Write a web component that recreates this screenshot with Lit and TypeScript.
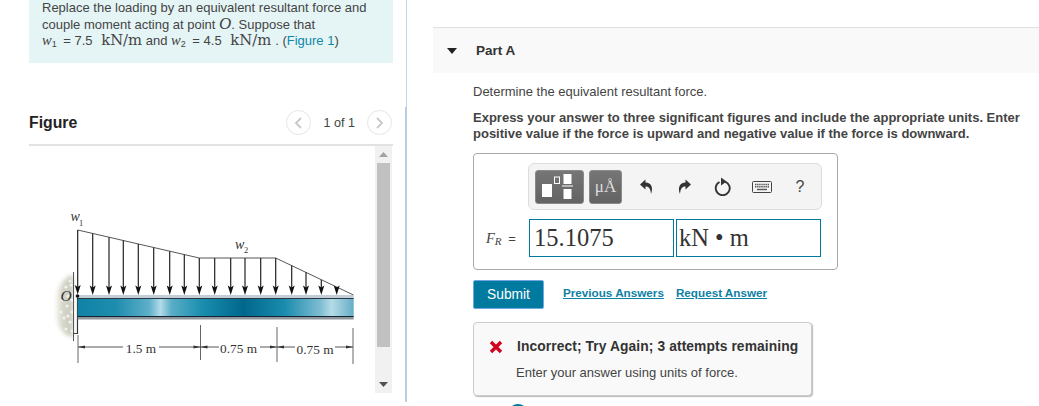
import { LitElement, html, css, svg } from "lit";
import { customElement } from "lit/decorators.js";

const ARROWS = [92.7, 109, 123.3, 138.3, 153.7, 169.7, 184.3, 199.3, 214.7, 230.7, 245, 260.7, 275.7, 291.7, 306, 321.3, 336.7];
function topAt(x: number) {
  if (x <= 199.3) return 230 + ((x - 77.7) / 121.6) * 28;
  if (x <= 275.7) return 258;
  return 258 + ((x - 275.7) / 78) * 37;
}
const STONES: [number, number][] = [[70,281],[66,287],[71,285],[72,300],[67,306],[72,312],[64,318],[70,322],[66,329],[72,331],[61,312],[62,300],[68,296],[68,316]];

function diagram() {
  return svg`
  <svg class="dia" width="346" height="240" viewBox="29 156 346 240">
    <defs>
      <linearGradient id="bm" x1="0" x2="1" y1="0" y2="0">
        <stop offset="0" stop-color="#0f82a5"/><stop offset=".14" stop-color="#1f8dae"/>
        <stop offset=".26" stop-color="#5fb0c9"/><stop offset=".3" stop-color="#b2dbe8"/>
        <stop offset=".34" stop-color="#5aadc6"/><stop offset=".45" stop-color="#1a8eaf"/>
        <stop offset=".6" stop-color="#00678c"/><stop offset=".75" stop-color="#1a8cae"/>
        <stop offset=".88" stop-color="#7fbdd2"/><stop offset=".92" stop-color="#b5dbe7"/>
        <stop offset="1" stop-color="#64adc6"/>
      </linearGradient>
      <linearGradient id="st" x1="0" x2="1" y1="0" y2="0">
        <stop offset="0" stop-color="#fff"/><stop offset=".35" stop-color="#d9d9cd"/><stop offset="1" stop-color="#c6c6b9"/>
      </linearGradient>
      <filter id="bl" x="-30%" y="-30%" width="160%" height="160%"><feGaussianBlur stdDeviation="2.2"/></filter>
      <filter id="bs" x="-50%" y="-50%" width="200%" height="200%"><feGaussianBlur stdDeviation=".5"/></filter>
    </defs>
    <path d="M73 275 C60 278 54 295 55 312 C57 328 64 336 73 337 Z" fill="url(#st)" filter="url(#bl)"/>
    ${STONES.map(([x, y]) => svg`<circle cx=${x} cy=${y} r="1.6" fill="#f2f2ec" filter="url(#bs)"/>`)}
    <path d="M73.5 272V341" stroke="#555" stroke-width="1" fill="none"/>
    <path d="M73.5 333.5H78" stroke="#444" stroke-width="1"/>
    <path d="M77.5 297V334" stroke="#333" stroke-width="1.2" fill="none"/>
    <path d="M77.7 230L199.3 258H275.7L353.5 295" stroke="#444" stroke-width=".9" fill="none"/>
    <path d="M77.7 230V290" stroke="#222" stroke-width="1.2"/>
    <path d="M74.7 285L77.7 294.5L80.7 285L77.7 287Z" fill="#111"/>
    ${ARROWS.map((x) => {
      const t = topAt(x);
      return svg`<path d="M${x} ${t}V289" stroke="#222" stroke-width="1.2"/><path d="M${x - 3} 285.5L${x} 295L${x + 3} 285.5L${x} 287.5Z" fill="#111"/>`;
    })}
    <rect x="77.7" y="295" width="276" height="3" fill="#c5ced6"/>
    <rect x="77.7" y="298" width="276" height="1" fill="#2a3a44"/>
    <rect x="77.7" y="299" width="276" height="17" fill="url(#bm)"/>
    <rect x="77.7" y="316" width="276" height="1" fill="#123"/>
    <rect x="77.7" y="317" width="276" height="2.5" fill="#8f969c"/>
    <circle cx="77.5" cy="296" r="1.8" fill="#111"/>
    <path d="M78 335V363M200.5 325V360M277 327V362M353 328V364" stroke="#555" stroke-width=".9"/>
    <path d="M78 347H123M159 347H200.5M200.5 347H219M260 347H277M277 347H295M335 347H353" stroke="#444" stroke-width=".9"/>
    <path d="M78 347l7-1.4v2.8zM200.5 347l-7-1.4v2.8zM200.5 347l7-1.4v2.8zM277 347l-7-1.4v2.8zM277 347l7-1.4v2.8zM353 347l-7-1.4v2.8z" fill="#333"/>
    <g class="lbl">
      <text x="141" y="353" text-anchor="middle">1.5 m</text>
      <text x="238.5" y="352.5" text-anchor="middle">0.75 m</text>
      <text x="315" y="354" text-anchor="middle">0.75 m</text>
    </g>
    <g class="var">
      <text x="70.5" y="221">w</text><text x="79" y="226" class="sub">1</text>
      <text x="235" y="249">w</text><text x="244" y="253" class="sub">2</text>
      <text x="60.5" y="301" class="o">O</text>
    </g>
  </svg>`;
}

@customElement("app-root")
export class AppRoot extends LitElement {
  static styles = css`
    :host {
      display: flex;
      width: 1039px;
      height: 406px;
      overflow: hidden;
      background: #fff;
      font-family: "Liberation Sans", Arial, sans-serif;
      color: #333;
    }
    .left { width: 364px; margin-left: 29px; flex: none; display: flex; flex-direction: column; }
    .info {
      height: 63px; flex: none; background: #e5f5f6; padding: 0 13px; box-sizing: border-box;
      font-size: 13px; line-height: 16.5px; color: #444; white-space: nowrap;
    }
    .info p { margin: 0; }
    .mi { font-family: "Liberation Serif", serif; font-style: italic; font-size: 14.5px; line-height: 0; }
    .o { font-size: 17px; }
    .mu { font-family: "DejaVu Serif", serif; font-size: 14.8px; color: #444; padding-left: 5px; line-height: 0; }
    .mu.last { padding-right: 4px; }
    .sub { font-size: 9px; vertical-align: -2px; font-style: normal; line-height: 0; margin-right: 3px; }
    a.fig { color: #0f88a8; text-decoration: none; }
    .fighead {
      margin-top: 41px; height: 42px; flex: none; box-sizing: border-box; border-bottom: 2px solid #e2e2e2;
      display: flex; align-items: center; justify-content: space-between; padding-bottom: 3px;
    }
    .fighead h2 { margin: 0; font-size: 15.8px; font-weight: bold; color: #222; }
    .pager { display: flex; align-items: center; gap: 12px; font-size: 12.6px; color: #444; margin-right: 1px; }
    .pg {
      width: 25px; height: 25px; border-radius: 50%; border: 1px solid #e6e6e6; box-sizing: border-box;
      display: flex; align-items: center; justify-content: center;
    }
    .figbody { flex: none; display: flex; justify-content: space-between; align-items: flex-start; }
    .dia { margin-top: 10px; flex: none; }
    .lbl text { font: 13.3px "Liberation Serif", serif; fill: #333; }
    .var text { font: italic 14px "Liberation Serif", serif; fill: #333; }
    .var text.sub { font: 8.5px "Liberation Serif", serif; }
    .var text.o { font: italic 15.5px "Liberation Serif", serif; }
    .scroll {
      margin-right: 1px; height: 247px; width: 17px; flex: none; background: #f1f1f1;
      display: flex; flex-direction: column; align-items: center;
    }
    .sbtn { height: 17px; flex: none; display: flex; align-items: center; justify-content: center; }
    .thumb { width: 13px; height: 184px; background: #c1c1c1; }
    .sp { flex: 1; }
    .divider { width: 2px; height: 402px; flex: none; margin-left: 12px; background: linear-gradient(#fff 107px, #b9cee3 107px); position: relative; }
    .divider::before { content: ""; position: absolute; left: 1px; width: 1px; top: 0; height: 107px; background: #c3d6e6; }
    .right { flex: 1; min-width: 0; display: flex; flex-direction: column; padding-left: 26px; padding-top: 27px; }
    .parthead {
      flex: none; border-top: 1px solid #e0e0e0; height: 46px; background: #f9f9f9; display: flex; align-items: center; box-sizing: border-box; padding-left: 14px; gap: 19px;
      font-size: 13.5px; font-weight: bold; color: #333;
    }
    .tri { width: 0; height: 0; border-left: 5px solid transparent; border-right: 5px solid transparent; border-top: 6px solid #222; }
    .partbody { flex: none; padding-left: 40px; }
    .det { font-size: 13px; color: #444; margin: 11px 0 0; line-height: 16px; }
    .exp { font-size: 13px; font-weight: bold; color: #444; margin: 10px 0 0; line-height: 16px; width: 560px; }
    .answer {
      margin-top: 11px; width: 365px; height: 117px; box-sizing: border-box; border: 1px solid #aaa; border-radius: 4px;
      padding: 9px 16px 0 0; display: flex; flex-direction: column; align-items: flex-end;
    }
    .tools {
      width: 294px; height: 47px; margin-right: -1px; box-sizing: border-box; border: 1px solid #ddd; border-radius: 6px; background: #f4f4f4;
      display: flex; align-items: center; padding-left: 6px;
    }
    .tb {
      height: 34px; border-radius: 3px; background: linear-gradient(#767676, #636363); box-sizing: border-box; border: 1px solid #8a8a8a;
      display: flex; align-items: center; justify-content: center; flex: none;
    }
    .tb1 { width: 49px; margin-right: 5px; }
    .tb2 { width: 33px; font: 17px "Liberation Serif", serif; color: #ddd; }
    .ic { width: 24px; height: 24px; display: flex; align-items: center; justify-content: center; flex: none; }
    .u { margin-left: 12px; }
    .i { margin-left: 14.5px; }
    .q { font-size: 16px; color: #444; }
    .row { display: flex; align-items: center; margin-top: 9px; }
    .lab { font-family: "Liberation Serif", serif; font-style: italic; font-size: 14.5px; width: 57px; padding-left: 14px; box-sizing: border-box; flex: none; white-space: nowrap; color: #444; }
    .lab .r { font-size: 11px; vertical-align: -2px; line-height: 0; }
    .lab .eq { font-style: normal; font-family: "Liberation Sans", sans-serif; font-size: 13px; margin-left: 3px; }
    .fld {
      width: 145px; height: 38px; box-sizing: border-box; border: 1px solid #00799e; font: 24.5px "Liberation Serif", serif; color: #333;
      display: flex; align-items: center; padding-left: 4px; flex: none;
    }
    .fld + .fld { margin-left: 2px; padding-left: 2px; }
    .acts { display: flex; align-items: flex-start; margin-top: 10px; height: 29px; }
    .submit {
      width: 71px; height: 29px; box-sizing: border-box; background: #007a9e; color: #fff; border: 1px solid #6fa8e0; border-radius: 2px;
      font: 13.8px "Liberation Sans", sans-serif; padding: 0; display: flex; align-items: center; justify-content: center;
    }
    .lnk { color: #0f7fa3; font-size: 11.7px; font-weight: bold; text-decoration: underline; margin-left: 12px; white-space: nowrap; line-height: 26px; }
    .lnk.first { margin-left: 19px; }
    .fb {
      margin-top: 13px; width: 339px; height: 74px; box-sizing: border-box; background: #f9f9f9; border: 1px solid #ccc;
      border-radius: 4px; box-shadow: 1px 1px 1px #bbb; padding: 15px 0 0 15px;
    }
    .fbh { display: flex; align-items: center; font-size: 13.8px; font-weight: bold; color: #333; line-height: 18px; letter-spacing: .1px; white-space: nowrap; }
    .fbh svg { margin-right: 14px; }
    .fbt { font-size: 13px; color: #444; margin: 9px 0 0 27px; line-height: 16px; white-space: nowrap; }
    .dot { margin: 8px 0 0 35px; width: 20px; height: 20px; border-radius: 50%; background: #007a9e; }
  `;

  render() {
    return html`
      <section class="left">
        <div class="info">
          <p>Replace the loading by an equivalent resultant force and<br />
          couple moment acting at point <span class="mi o">O</span>. Suppose that<br />
          <span class="mi">w</span><span class="sub">1</span> = 7.5 <span class="mu">kN/m</span> and <span class="mi">w</span><span class="sub">2</span> = 4.5 <span class="mu last">kN/m</span>. (<a class="fig">Figure 1</a>)</p>
        </div>
        <div class="fighead">
          <h2>Figure</h2>
          <div class="pager">
            <span class="pg"><svg width="9" height="12" viewBox="0 0 9 12"><path d="M7 1L2 6L7 11" fill="none" stroke="#c8c8c8" stroke-width="1.8"/></svg></span>
            <span>1 of 1</span>
            <span class="pg"><svg width="9" height="12" viewBox="0 0 9 12"><path d="M2 1L7 6L2 11" fill="none" stroke="#c8c8c8" stroke-width="1.8"/></svg></span>
          </div>
        </div>
        <div class="figbody">
          ${diagram()}
          <div class="scroll">
            <div class="sbtn"><svg width="9" height="5"><path d="M0 5L4.5 0L9 5Z" fill="#a3a3a3"/></svg></div>
            <div class="thumb"></div>
            <div class="sp"></div>
            <div class="sbtn"><svg width="9" height="5"><path d="M0 0L4.5 5L9 0Z" fill="#505050"/></svg></div>
          </div>
        </div>
      </section>
      <div class="divider"></div>
      <section class="right">
        <div class="parthead"><span class="tri"></span><span>Part A</span></div>
        <div class="partbody">
          <p class="det">Determine the equivalent resultant force.</p>
          <p class="exp">Express your answer to three significant figures and include the appropriate units. Enter positive value if the force is upward and negative value if the force is downward.</p>
          <div class="answer">
            <div class="tools">
              <div class="tb tb1">
                <svg width="47" height="32" viewBox="536 170 47 32">
                  <rect x="542" y="183" width="10" height="13" fill="#fff"/>
                  <rect x="554.5" y="176" width="5" height="6.5" fill="none" stroke="#fff"/>
                  <rect x="563.5" y="173" width="8" height="10" fill="#fff"/>
                  <rect x="562" y="184.5" width="11" height="1" fill="#fff"/>
                  <rect x="563.5" y="188" width="8" height="10" fill="#fff"/>
                </svg>
              </div>
              <div class="tb tb2">μÅ</div>
              <span class="ic u"><svg width="15" height="16" viewBox="0 0 15 16"><path d="M6.5 .5L1 5.5L6.5 10.5V7.5C9.5 7.5 11.5 9 12 15C14.5 9 12.5 3.5 6.5 3.5Z" fill="#333"/></svg></span>
              <span class="ic i"><svg width="15" height="16" viewBox="0 0 15 16"><path d="M8.5 .5L14 5.5L8.5 10.5V7.5C5.5 7.5 3.5 9 3 15C.5 9 2.5 3.5 8.5 3.5Z" fill="#333"/></svg></span>
              <span class="ic i"><svg width="18" height="19" viewBox="0 0 18 19"><path d="M11 4.6A7 7 0 1 1 5.5 5" fill="none" stroke="#333" stroke-width="1.9"/><path d="M7 .5L12.5 4.5L7 8.5Z" fill="#333"/></svg></span>
              <span class="ic i"><svg width="20" height="12" viewBox="0 0 20 12"><rect x=".5" y=".5" width="19" height="11" rx="1" fill="#f4f4f4" stroke="#444"/><path d="M3 3.5h14M3 5.8h14" stroke="#555" stroke-width="1.4" stroke-dasharray="1.4 .7"/><path d="M5 8.5h10" stroke="#555" stroke-width="1.4"/></svg></span>
              <span class="ic i q">?</span>
            </div>
            <div class="row">
              <span class="lab">F<span class="r">R</span><span class="eq"> =</span></span>
              <div class="fld">15.1075</div>
              <div class="fld">kN • m</div>
            </div>
          </div>
          <div class="acts">
            <button class="submit">Submit</button>
            <a class="lnk first">Previous Answers</a>
            <a class="lnk">Request Answer</a>
          </div>
          <div class="fb">
            <div class="fbh">
              <svg width="14" height="14" viewBox="0 0 14 14"><path d="M2 2L12 12M12 2L2 12" stroke="#d4021d" stroke-width="3.4"/></svg>
              Incorrect; Try Again; 3 attempts remaining
            </div>
            <div class="fbt">Enter your answer using units of force.</div>
          </div>
          <div class="dot"></div>
        </div>
      </section>
    `;
  }
}
